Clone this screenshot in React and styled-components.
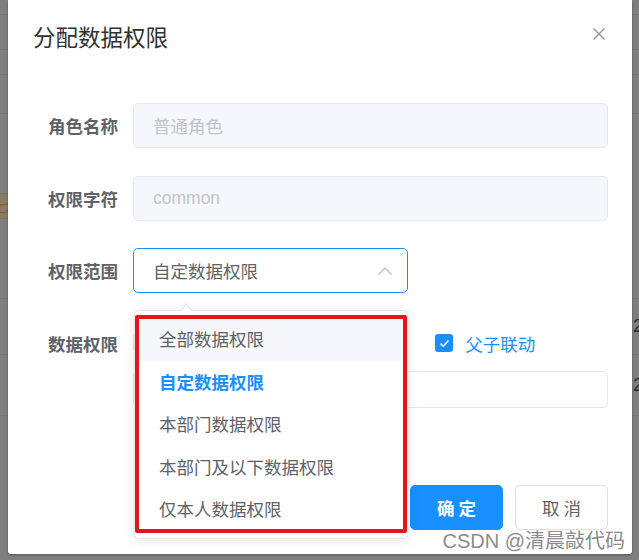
import React from 'react'
import styled, { createGlobalStyle } from 'styled-components';

const GlobalStyle = createGlobalStyle`
  body {
    margin: 0;
    font-family: "Liberation Sans", "Noto Sans CJK SC", sans-serif;
  }
`;

const bgRows = [
  { h: 15, line: true },
  { h: 35, line: true },
  { h: 25, line: true },
  { h: 39, line: true },
  { h: 185, line: true, tag: true },
  { h: 56, line: true, num: true },
  { h: 61, line: true, num: true },
  { h: 144, line: false },
];

const options = ['全部数据权限', '自定数据权限', '本部门数据权限', '本部门及以下数据权限', '仅本人数据权限'];

const Check = ({ checked }) => (
  <CheckBox $checked={checked}>
    {checked && (
      <svg width="11" height="9" viewBox="0 0 11 9">
        <path d="M1.5 4.6 L4.2 7.2 L9.5 1.6" fill="none" stroke="#fff" strokeWidth="1.5" />
      </svg>
    )}
  </CheckBox>
);

const App = () => {
  return (
    <Page>
      <GlobalStyle />
      <Backdrop>
        {bgRows.map((r, i) => (
          <BgRow key={i} $h={r.h} $line={r.line}>
            {r.tag && <BgTag>七</BgTag>}
            {r.num && <BgNum>2</BgNum>}
          </BgRow>
        ))}
      </Backdrop>

      <Dialog>
        <Header>
          <Title>分配数据权限</Title>
          <Close>
            <svg width="14" height="14" viewBox="0 0 14 14">
              <path d="M1.5 1.5 L12.5 12.5 M12.5 1.5 L1.5 12.5" stroke="#909399" strokeWidth="1.4" />
            </svg>
          </Close>
        </Header>

        <Body>
          <FormItem>
            <Label>角色名称</Label>
            <Field>
              <Input $disabled>普通角色</Input>
            </Field>
          </FormItem>
          <FormItem>
            <Label>权限字符</Label>
            <Field>
              <Input $disabled>common</Input>
            </Field>
          </FormItem>
          <FormItem>
            <Label>权限范围</Label>
            <Field>
              <Input $focused $width="275px">
                <span>自定数据权限</span>
                <svg width="16" height="10" viewBox="0 0 16 10">
                  <path d="M1.5 8.5 L8 2 L14.5 8.5" fill="none" stroke="#c0c4cc" strokeWidth="1.5" />
                </svg>
              </Input>
            </Field>
          </FormItem>
          <FormItem>
            <Label>数据权限</Label>
            <Field>
              <CheckRow>
                <CheckItem><Check />展开/折叠</CheckItem>
                <CheckItem><Check />全选/全不选</CheckItem>
                <CheckItem $active><Check checked />父子联动</CheckItem>
              </CheckRow>
              <TreeBox />
            </Field>
          </FormItem>
        </Body>

        <Footer>
          <Button $primary>确 定</Button>
          <Button>取 消</Button>
        </Footer>
      </Dialog>

      <Dropdown>
        {options.map((o, i) => (
          <Option key={o} $hover={i === 0} $selected={i === 1}>{o}</Option>
        ))}
      </Dropdown>
      <RedMark />

      <Watermark>CSDN @清晨敲代码</Watermark>
    </Page>
  );
};

export default App

const Page = styled.div`
  position: relative;
  width: 639px;
  height: 560px;
  overflow: hidden;
  background: #7f7f7f;
`;

const Backdrop = styled.div`
  display: flex;
  flex-direction: column;
`;

const BgRow = styled.div`
  height: ${p => p.$h}px;
  box-sizing: border-box;
  border-bottom: ${p => (p.$line ? '1px solid #76777a' : 'none')};
  display: flex;
  align-items: center;
  justify-content: space-between;
`;

const BgTag = styled.span`
  margin-left: -12px;
  height: 24px;
  width: 20px;
  border: 1px solid #8a7440;
  background: #857d6c;
  color: #8a5f10;
  font-size: 15px;
  line-height: 24px;
  text-align: right;
  font-family: "Noto Sans CJK SC", sans-serif;
`;

const BgNum = styled.span`
  margin-left: auto;
  margin-right: -4px;
  color: #2b2b2b;
  font-size: 18px;
`;

const Dialog = styled.div`
  position: absolute;
  left: 8px;
  top: 0;
  width: 624px;
  height: 554px;
  background: #fff;
  border-radius: 0 0 3px 3px;
  box-shadow: 0 1px 3px rgba(0, 0, 0, 0.3);
  display: flex;
  flex-direction: column;
  font-family: "Noto Sans CJK SC", sans-serif;
`;

const Header = styled.div`
  display: flex;
  justify-content: space-between;
  align-items: center;
  padding: 21px 26px 14px 25px;
`;

const Title = styled.span`
  font-size: 22.5px;
  line-height: 30px;
  color: #303133;
`;

const Close = styled.span`
  display: flex;
  margin-top: -4px;
`;

const Body = styled.div`
  padding: 38px 24px 0 25px;
`;

const FormItem = styled.div`
  display: flex;
  margin-bottom: 27.5px;
`;

const Label = styled.label`
  width: 100px;
  flex-shrink: 0;
  box-sizing: border-box;
  padding-right: 15px;
  text-align: right;
  font-size: 17.5px;
  font-weight: 700;
  line-height: 45px;
  color: #606266;
`;

const Field = styled.div`
  flex: 1;
  display: flex;
  flex-direction: column;
`;

const Input = styled.div`
  width: ${p => p.$width || 'auto'};
  height: 45px;
  box-sizing: border-box;
  padding: 0 14px 0 19px;
  display: flex;
  align-items: center;
  justify-content: space-between;
  border: 1px solid ${p => (p.$focused ? '#1890ff' : '#e4e7ed')};
  border-radius: 5px;
  background: ${p => (p.$disabled ? '#f5f7fa' : '#fff')};
  color: ${p => (p.$disabled ? '#c0c4cc' : '#606266')};
  font-size: 17.5px;
  font-family: ${p => (p.$disabled ? '"Liberation Sans", "Noto Sans CJK SC", sans-serif' : 'inherit')};
`;

const CheckRow = styled.div`
  display: flex;
  align-items: center;
  height: 45px;
`;

const CheckItem = styled.span`
  display: flex;
  align-items: center;
  gap: 12.5px;
  margin-right: 35.5px;
  font-size: 17.5px;
  color: ${p => (p.$active ? '#1890ff' : '#606266')};
`;

const CheckBox = styled.span`
  width: 17.5px;
  height: 17.5px;
  box-sizing: border-box;
  border-radius: 2.5px;
  border: 1px solid ${p => (p.$checked ? '#1890ff' : '#dcdfe6')};
  background: ${p => (p.$checked ? '#1890ff' : '#fff')};
  display: flex;
  align-items: center;
  justify-content: center;
`;

const TreeBox = styled.div`
  margin-top: 5px;
  height: 35px;
  border: 1px solid #e5e6e7;
  border-radius: 5px;
`;

const Footer = styled.div`
  margin-top: auto;
  display: flex;
  justify-content: flex-end;
  gap: 12px;
  padding: 0 24px 24px;
`;

const Button = styled.button`
  width: 93px;
  height: 45px;
  border-radius: 5px;
  border: 1px solid ${p => (p.$primary ? '#1890ff' : '#dcdfe6')};
  background: ${p => (p.$primary ? '#1890ff' : '#fff')};
  color: ${p => (p.$primary ? '#fff' : '#606266')};
  font-size: 17.5px;
  font-family: "Noto Sans CJK SC", sans-serif;
  font-weight: ${p => (p.$primary ? 700 : 400)};
`;

const Dropdown = styled.div`
  position: absolute;
  left: 134px;
  top: 310px;
  width: 274px;
  box-sizing: border-box;
  padding: 7px 0;
  background: #fff;
  border: 1px solid #e4e7ed;
  border-radius: 5px;
  box-shadow: 0 2px 12px rgba(0, 0, 0, 0.1);
  font-family: "Noto Sans CJK SC", sans-serif;

  &::before {
    content: '';
    position: absolute;
    left: 44px;
    top: -8px;
    border: 7px solid transparent;
    border-top: 0;
    border-bottom: 8px solid #e4e7ed;
  }
  &::after {
    content: '';
    position: absolute;
    left: 45px;
    top: -6px;
    border: 6px solid transparent;
    border-top: 0;
    border-bottom: 7px solid #fff;
  }
`;

const Option = styled.div`
  height: 42.5px;
  line-height: 42.5px;
  padding-left: 24px;
  font-size: 17.5px;
  background: ${p => (p.$hover ? '#f5f7fa' : '#fff')};
  color: ${p => (p.$selected ? '#1890ff' : '#606266')};
  font-weight: ${p => (p.$selected ? 700 : 400)};
`;

const RedMark = styled.div`
  position: absolute;
  left: 135px;
  top: 315px;
  width: 272px;
  height: 218px;
  box-sizing: border-box;
  border: 4px solid #e8141c;
  border-radius: 2px;
`;

const Watermark = styled.div`
  position: absolute;
  right: 14px;
  bottom: 7px;
  font-size: 20px;
  line-height: 24px;
  color: #8c8c8c;
  text-shadow: 0 0 2px #fff;
  font-family: "Liberation Sans", "Noto Sans CJK SC", sans-serif;
`;
